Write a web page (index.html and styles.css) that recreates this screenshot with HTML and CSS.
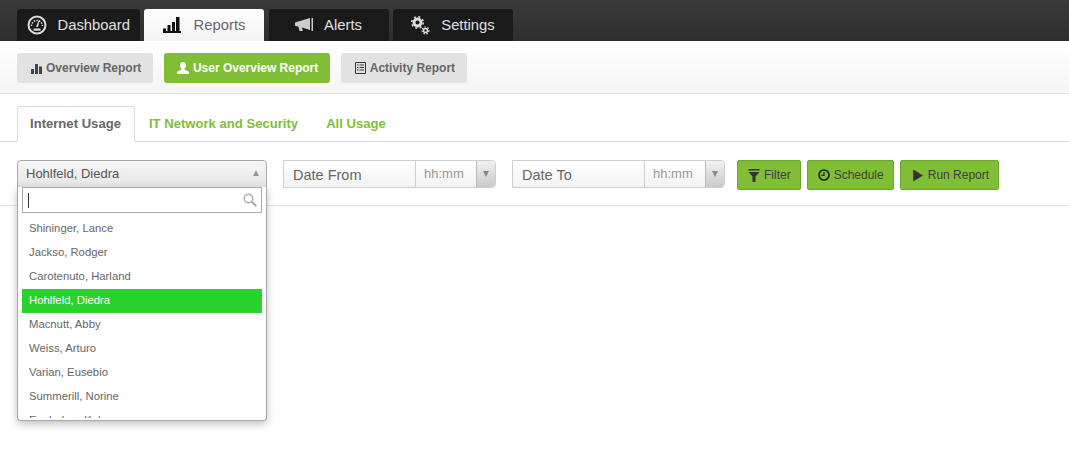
FILE: index.html
```html
<!DOCTYPE html>
<html lang="en">
  <head>
    <meta charset="UTF-8" />
    <title>Reports</title>
    <link rel="stylesheet" href="styles.css">
  </head>
  <body>
    <nav class="topnav">
      <a class="topnav-tab wide">
        <svg width="20" height="20" viewBox="0 0 20 20"><circle cx="10" cy="10" r="8.500" fill="none" stroke="#ddd" stroke-width="2"/><path d="M4.500 11a5.500 5.500 0 0 1 11 0" fill="none" stroke="#ddd" stroke-width="1.600" stroke-dasharray="1.400 1.200"/><path d="M9 11.500l3-6.500 .6 .3-1.600 7z" fill="#ddd"/><rect x="6.500" y="13.500" width="7" height="2.200" fill="#ddd"/></svg>
        Dashboard
      </a>
      <a class="topnav-tab active">
        <svg width="18" height="16" viewBox="0 0 18 16"><path d="M0 14h3v-2.500h-3zM4.500 14h3v-6h-3zM9 14h3v-9h-3zM13 14h3.500v-14h-3.500zM0 14h18v2h-18z" fill="#111"/></svg>
        Reports
      </a>
      <a class="topnav-tab">
        <svg width="18" height="14" viewBox="0 0 18 14"><path d="M0 4.500l15-4.500v12l-8-2.500 .8 3.500h-3.300l-1-4.300-3.500-1z" fill="#ccc"/><rect x="16.500" y="0" width="1.500" height="13" fill="#ccc"/></svg>
        Alerts
      </a>
      <a class="topnav-tab">
        <svg width="19" height="19" viewBox="0 0 19 19"><circle cx="6.500" cy="6.500" r="3.500" fill="none" stroke="#ddd" stroke-width="2.800"/><circle cx="6.500" cy="6.500" r="5.700" fill="none" stroke="#ddd" stroke-width="1.600" stroke-dasharray="2 2.500"/><circle cx="14.500" cy="14.500" r="2" fill="none" stroke="#ddd" stroke-width="1.600"/><circle cx="14.500" cy="14.500" r="3.500" fill="none" stroke="#ddd" stroke-width="1.200" stroke-dasharray="1.500 1.500"/></svg>
        Settings
      </a>
    </nav>

    <div class="subnav">
      <a class="pill">
        <svg width="11" height="11" viewBox="0 0 11 11"><path d="M0 6h3v5h-3zM4 1h3v10h-3zM8 3.500h3v7.500h-3z" fill="#444"/></svg>
        Overview Report
      </a>
      <a class="pill active">
        <svg width="12" height="12" viewBox="0 0 12 12"><path d="M6 0c2 0 3 1.300 3 3.300 0 1.500-.6 2.700-1.400 3.300v1.200l3.400 1.400c.6 .3 1 .8 1 1.500v1.300h-12v-1.300c0-.7 .4-1.200 1-1.500l3.400-1.400v-1.200c-.8-.6-1.400-1.800-1.400-3.300 0-2 1-3.300 3-3.300z" fill="#fff"/></svg>
        User Overview Report
      </a>
      <a class="pill">
        <svg width="11" height="12" viewBox="0 0 11 12"><path d="M.5 .5h10v11h-10z" fill="none" stroke="#333"/><path d="M2 2.500h1.500v1h-1.500zM4.500 2.500h4.500v1h-4.500zM2 5h1.500v1h-1.500zM4.500 5h4.500v1h-4.500zM2 7.500h1.500v1h-1.500zM4.500 7.500h4.500v1h-4.500z" fill="#333"/></svg>
        Activity Report
      </a>
    </div>

    <div class="tabs">
      <a class="tab active">Internet Usage</a>
      <a class="tab">IT Network and Security</a>
      <a class="tab">All Usage</a>
    </div>

    <div class="filters">
      <div class="user-select">
        <div class="user-select-head">
          <span>Hohlfeld, Diedra</span>
          <i class="caret-up"></i>
        </div>
        <div class="user-select-drop">
          <div class="user-search">
            <span class="text-cursor"></span>
            <svg width="14" height="14" viewBox="0 0 14 14"><circle cx="5.500" cy="5.500" r="4.300" fill="none" stroke="#aaa" stroke-width="1.400"/><path d="M8.800 8.800l4.500 4.500" stroke="#aaa" stroke-width="2"/></svg>
          </div>
          <ul class="user-list">
            <li>Shininger, Lance</li>
            <li>Jackso, Rodger</li>
            <li>Carotenuto, Harland</li>
            <li class="selected">Hohlfeld, Diedra</li>
            <li>Macnutt, Abby</li>
            <li>Weiss, Arturo</li>
            <li>Varian, Eusebio</li>
            <li>Summerill, Norine</li>
            <li>Engledow, Kolya</li>
          </ul>
        </div>
      </div>

      <div class="date-field">
        <span class="date-label">Date From</span>
        <span class="date-time">hh:mm</span>
        <span class="date-arrow"><i class="caret-down"></i></span>
      </div>
      <div class="date-field">
        <span class="date-label">Date To</span>
        <span class="date-time">hh:mm</span>
        <span class="date-arrow"><i class="caret-down"></i></span>
      </div>

      <div class="actions">
        <a class="btn">
          <svg width="12" height="13" viewBox="0 0 12 13"><path d="M.5 0h11v1.500h-11zM.5 3h11l-4 4.500v5.500h-3v-5.500z" fill="#333"/></svg>
          Filter
        </a>
        <a class="btn">
          <svg width="12" height="12" viewBox="0 0 12 12"><circle cx="6" cy="6" r="5" fill="none" stroke="#222" stroke-width="1.700"/><path d="M6 3v3.300h-2.500" fill="none" stroke="#222" stroke-width="1.200"/></svg>
          Schedule
        </a>
        <a class="btn">
          <svg width="13" height="13" viewBox="0 0 13 13"><path d="M2.500 1l9 5.500-9 5.500z" fill="#333" stroke="#333" stroke-width="0.600"/></svg>
          Run Report
        </a>
      </div>
    </div>
  </body>
</html>
```

FILE: styles.css
```css
* {
  margin: 0;
  padding: 0;
  box-sizing: border-box;
  font-family: "Liberation Sans", Arial, sans-serif;
}

body {
  min-height: 100vh;
  background: white;
  color: #5f5a58;
}

/* top bar */
.topnav {
  display: flex;
  height: 41px;
  padding: 9px 0 0 17px;
  gap: 4.500px;
  background: linear-gradient(#3a3a3a, #2e2e2e);
}

.topnav-tab {
  display: flex;
  align-items: center;
  justify-content: center;
  width: 120px;
  gap: 11px;
  background: #1a1a1a;
  border-radius: 3px 3px 0 0;
  color: #e0e0e0;
  font-size: 14.800px;
}

.topnav-tab.wide {
  width: 122.500px;
}

.topnav-tab.active {
  gap: 13px;
  background: linear-gradient(white, #f3f3f3);
  color: #666;
}

/* second row */
.subnav {
  display: flex;
  height: 53px;
  padding: 12px 0 0 17px;
  gap: 10.500px;
  background: linear-gradient(white, #f5f5f5);
  border-bottom: 1px solid #e2e2e2;
}

.pill {
  display: flex;
  align-items: center;
  height: 30px;
  padding: 0 12px 0 14px;
  gap: 4px;
  background: #e2e2e2;
  border-radius: 3px;
  color: #666;
  font-size: 12px;
  font-weight: bold;
}

.pill.active {
  padding: 0 12px 0 13px;
  background: #7fbe35;
  color: white;
}

/* usage tabs */
.tabs {
  display: flex;
  height: 36px;
  margin-top: 12px;
  padding-left: 17px;
  border-bottom: 1px solid #dcdcdc;
}

.tab {
  padding: 10px 14px 0;
  color: #7fbe35;
  font-size: 13.100px;
  font-weight: bold;
  line-height: 16px;
}

.tab.active {
  margin-bottom: -1px;
  padding: 9px 13px 0 12px;
  background: white;
  border: 1px solid #dcdcdc;
  border-bottom: 1px solid white;
  border-radius: 3px 3px 0 0;
  color: #666;
}

/* filter row */
.filters {
  display: flex;
  align-items: flex-start;
  height: 64px;
  padding: 18px 0 0 17px;
  border-bottom: 1px solid #e2e2e2;
}

.user-select {
  position: relative;
  width: 250px;
  margin-right: 16px;
}

.user-select-head {
  display: flex;
  align-items: center;
  justify-content: space-between;
  height: 28px;
  padding: 0 7px 2px 8px;
  background: linear-gradient(#f6f6f6, #e6e6e6);
  border: 1px solid #a9a9a9;
  border-radius: 4px 4px 0 0;
  color: #555;
  font-size: 13px;
}

.caret-up {
  width: 0;
  height: 0;
  border-left: 3.500px solid transparent;
  border-right: 3.500px solid transparent;
  border-bottom: 6px solid #999;
}

.caret-down {
  width: 0;
  height: 0;
  border-left: 3px solid transparent;
  border-right: 3px solid transparent;
  border-top: 6px solid #888;
}

.user-select-drop {
  position: absolute;
  top: 27px;
  left: 0;
  width: 250px;
  height: 234px;
  padding: 0 4px;
  background: white;
  border: 1px solid #a9a9a9;
  border-top: none;
  border-radius: 0 0 4px 4px;
  box-shadow: 0 3px 8px rgba(0, 0, 0, 0.25);
  z-index: 10;
}

.user-search {
  display: flex;
  align-items: center;
  justify-content: space-between;
  height: 26px;
  padding: 0 4px 0 5px;
  background: white;
  border: 1px solid #aaa;
}

.text-cursor {
  width: 1px;
  height: 15px;
  background: #333;
}

.user-list {
  height: 201px;
  margin-top: 4px;
  overflow: hidden;
  list-style: none;
}

.user-list li {
  height: 24px;
  padding-left: 7px;
  color: #666;
  font-size: 11.300px;
  line-height: 22px;
}

.user-list li.selected {
  background: #29d22d;
  color: white;
}

.date-field {
  display: flex;
  width: 213px;
  height: 28px;
  margin-right: 16px;
  background: linear-gradient(white, #f2f2f2);
  border: 1px solid #cfcfcf;
  border-radius: 0 4px 4px 0;
}

.date-label {
  flex: 1;
  padding-left: 9px;
  color: #666;
  font-size: 14.500px;
  line-height: 29px;
}

.date-time {
  width: 61px;
  padding-left: 8px;
  border-left: 1px solid #cfcfcf;
  color: #999;
  font-size: 13px;
  line-height: 25px;
}

.date-arrow {
  display: flex;
  align-items: center;
  justify-content: center;
  width: 19px;
  background: linear-gradient(#f2f2f2, #c9c9c9);
  border-left: 1px solid #bbb;
  border-radius: 0 4px 4px 0;
}

.actions {
  display: flex;
  margin-left: -4px;
  gap: 6px;
}

.btn {
  display: flex;
  align-items: center;
  height: 30px;
  padding: 0 9px 0 10px;
  gap: 4px;
  background: #7fbe35;
  border: 1px solid #6ba62b;
  border-radius: 2px;
  color: #3f3f3f;
  font-size: 12px;
}
```
